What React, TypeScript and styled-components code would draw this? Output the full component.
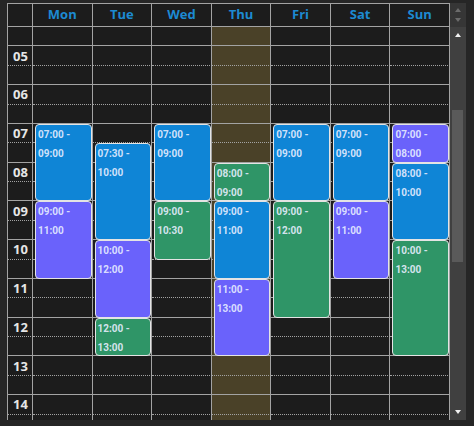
import React from "react";
import styled, { createGlobalStyle } from "styled-components";

const LINE = "#a3a3a3";
const CELL_BG = "#1c1c1c";
const ROW_H = 19.375;
const FIRST = 4.5;
const ROWS = 21;

const GlobalStyle = createGlobalStyle`
  html, body { margin: 0; padding: 0; background: #262626; }
  * { box-sizing: border-box; }
`;

const Page = styled.div`
  padding: 3px 0 0 7px;
`;

const Frame = styled.div`
  display: flex;
  width: 459px;
  height: 417px;
`;

const Main = styled.div`
  flex: 1;
  display: flex;
  flex-direction: column;
  border-left: 1px solid ${LINE};
  border-top: 1px solid ${LINE};
  min-width: 0;
`;

const HeaderRow = styled.div`
  display: grid;
  grid-template-columns: 25px repeat(7, 1fr);
  height: 23px;
  flex: none;
`;

const HeaderCell = styled.div`
  background: ${CELL_BG};
  border-right: 1px solid ${LINE};
  border-bottom: 1px solid ${LINE};
  color: #1d8ad2;
  font-family: "Open Sans", "DejaVu Sans", sans-serif;
  font-weight: 700;
  font-size: 13px;
  display: flex;
  align-items: center;
  justify-content: center;
  padding-bottom: 2px;
`;

const Viewport = styled.div`
  height: 393px;
  overflow: hidden;
`;

const BodyGrid = styled.div`
  display: grid;
  grid-template-columns: 25px repeat(7, 1fr);
  grid-template-rows: repeat(${ROWS}, ${ROW_H}px);
`;

const SlotCell = styled.div<{ $row: number; $col: number; $solid: boolean; $hl?: boolean }>`
  grid-row: ${(p) => p.$row};
  grid-column: ${(p) => p.$col};
  background: ${(p) => (p.$hl ? "#4a4128" : CELL_BG)};
  border-right: 1px solid ${LINE};
  border-bottom: 1px ${(p) => (p.$solid ? "solid" : "dotted")} ${LINE};
`;

const TimeLabel = styled.div`
  height: 100%;
  display: flex;
  align-items: center;
  padding-left: 5px;
  color: #e6e6e6;
  font-family: "Open Sans", "DejaVu Sans", sans-serif;
  font-weight: 700;
  font-size: 13px;
`;

const EVENT_COLORS: Record<string, string> = {
  blue: "#0f85d6",
  purple: "#6a62fb",
  green: "#2f9567",
};

const EventCard = styled.div<{ $col: number; $start: number; $end: number; $color: string }>`
  grid-column: ${(p) => p.$col};
  grid-row: ${(p) => p.$start} / ${(p) => p.$end};
  margin: 0 1px 0 2px;
  position: relative;
  z-index: 1;
  background: ${(p) => EVENT_COLORS[p.$color]};
  border: 1px solid #e4e4e4;
  border-radius: 4px;
  padding: 0 2px;
  color: rgba(232, 238, 255, 0.9);
  font-family: Roboto, "Liberation Sans", sans-serif;
  font-weight: 700;
  font-size: 10px;
  line-height: 19px;
  overflow: hidden;
`;

const EventLine = styled.div`
  white-space: nowrap;
`;

const ScrollCol = styled.div`
  width: 16px;
  flex: none;
  display: flex;
  flex-direction: column;
  background: #3d3d3d;
`;

const ScrollHead = styled.div`
  height: 24px;
  flex: none;
  display: flex;
  flex-direction: column;
  align-items: center;
  justify-content: center;
  gap: 6px;
  background: #363636;
`;

const Track = styled.div`
  flex: 1;
  display: flex;
  flex-direction: column;
  background: #404040;
`;

const ArrowBtn = styled.div`
  height: 16px;
  flex: none;
  display: flex;
  align-items: center;
  justify-content: center;
`;

const Thumb = styled.div<{ $gap: number; $len: number }>`
  margin-top: ${(p) => p.$gap}px;
  height: ${(p) => p.$len}px;
  width: 11px;
  margin-left: 2px;
  background: #5a5a5a;
  flex: none;
`;

const Spacer = styled.div`
  flex: 1;
`;

const Tri = ({ up, color, w = 6, h = 4 }: { up: boolean; color: string; w?: number; h?: number }) => (
  <svg width={w} height={h} viewBox={`0 0 ${w} ${h}`} style={{ display: "block" }}>
    <polygon points={up ? `0,${h} ${w},${h} ${w / 2},0` : `0,0 ${w},0 ${w / 2},${h}`} fill={color} />
  </svg>
);

const DAYS = ["Mon", "Tue", "Wed", "Thu", "Fri", "Sat", "Sun"];

type Ev = { day: number; s: string; e: string; c: string };
const EVENTS: Ev[] = [
  { day: 0, s: "07:00", e: "09:00", c: "blue" },
  { day: 0, s: "09:00", e: "11:00", c: "purple" },
  { day: 1, s: "07:30", e: "10:00", c: "blue" },
  { day: 1, s: "10:00", e: "12:00", c: "purple" },
  { day: 1, s: "12:00", e: "13:00", c: "green" },
  { day: 2, s: "07:00", e: "09:00", c: "blue" },
  { day: 2, s: "09:00", e: "10:30", c: "green" },
  { day: 3, s: "08:00", e: "09:00", c: "green" },
  { day: 3, s: "09:00", e: "11:00", c: "blue" },
  { day: 3, s: "11:00", e: "13:00", c: "purple" },
  { day: 4, s: "07:00", e: "09:00", c: "blue" },
  { day: 4, s: "09:00", e: "12:00", c: "green" },
  { day: 5, s: "07:00", e: "09:00", c: "blue" },
  { day: 5, s: "09:00", e: "11:00", c: "purple" },
  { day: 6, s: "07:00", e: "08:00", c: "purple" },
  { day: 6, s: "08:00", e: "10:00", c: "blue" },
  { day: 6, s: "10:00", e: "13:00", c: "green" },
];

const toHours = (t: string) => {
  const [h, m] = t.split(":").map(Number);
  return h + m / 60;
};
const toLine = (t: string) => Math.round((toHours(t) - FIRST) * 2) + 1;

export default function App() {
  const cells: React.ReactNode[] = [];
  for (let i = 0; i < ROWS; i++) {
    const start = FIRST + i * 0.5;
    const solid = i % 2 === 0;
    const isHour = Number.isInteger(start);
    for (let c = 0; c < 8; c++) {
      cells.push(
        <SlotCell key={`${i}-${c}`} $row={i + 1} $col={c + 1} $solid={solid} $hl={c === 4}>
          {c === 0 && isHour ? <TimeLabel>{String(start).padStart(2, "0")}</TimeLabel> : null}
        </SlotCell>
      );
    }
  }

  return (
    <>
      <GlobalStyle />
      <Page>
        <Frame>
          <Main>
            <HeaderRow>
              <HeaderCell />
              {DAYS.map((d) => (
                <HeaderCell key={d}>{d}</HeaderCell>
              ))}
            </HeaderRow>
            <Viewport>
              <BodyGrid>
                {cells}
                {EVENTS.map((ev, idx) => (
                  <EventCard
                    key={idx}
                    $col={ev.day + 2}
                    $start={toLine(ev.s)}
                    $end={toLine(ev.e)}
                    $color={ev.c}
                  >
                    <EventLine>{ev.s} -</EventLine>
                    <EventLine>{ev.e}</EventLine>
                  </EventCard>
                ))}
              </BodyGrid>
            </Viewport>
          </Main>
          <ScrollCol>
            <ScrollHead>
              <Tri up color="#6c6c6c" />
              <Tri up={false} color="#6c6c6c" />
            </ScrollHead>
            <Track>
              <ArrowBtn>
                <Tri up color="#f0f0f0" />
              </ArrowBtn>
              <Thumb $gap={67} $len={152} />
              <Spacer />
              <ArrowBtn>
                <Tri up={false} color="#f0f0f0" />
              </ArrowBtn>
            </Track>
          </ScrollCol>
        </Frame>
      </Page>
    </>
  );
}
